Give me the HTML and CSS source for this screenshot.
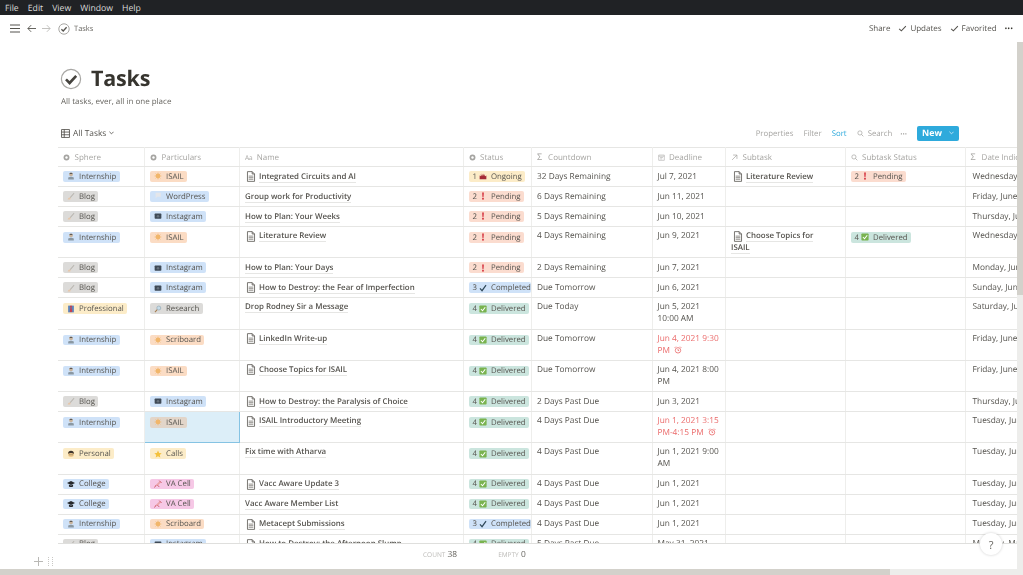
FILE: index.html
```html
<!DOCTYPE html>
<html lang="en">
<head>
<meta charset="utf-8">
<title>Tasks</title>
<link rel="stylesheet" href="styles.css">
</head>
<body>
<svg class="defs" width="0" height="0" aria-hidden="true">
  <symbol id="doc" viewBox="0 0 12 14"><path d="M1.5 .8h6l3 3v9.4h-9z M7.5 .8v3h3" fill="none" stroke="#55534e" stroke-width="1"/><path d="M3 6.5h6M3 8.5h6M3 10.5h6" stroke="#8d8b87" stroke-width="1.2"/></symbol>
  <symbol id="circ" viewBox="0 0 10 10"><circle cx="5" cy="5" r="4.2" fill="#a5a4a1"/><circle cx="5" cy="5" r="1.7" fill="#fff"/></symbol>
  <symbol id="cal" viewBox="0 0 10 10"><path d="M1 1.5h8v7.5h-8zM1 3.2h8M3 5h4M3 7h3" fill="none" stroke="#a5a4a1" stroke-width=".8"/></symbol>
  <symbol id="ne" viewBox="0 0 10 10"><path d="M1.5 8.5L8.5 1.5M3 1.5h5.5V7" fill="none" stroke="#a5a4a1" stroke-width="1"/></symbol>
  <symbol id="mag" viewBox="0 0 10 10"><circle cx="4.2" cy="4.2" r="3" fill="none" stroke="#a5a4a1"/><path d="M6.4 6.4L9 9" stroke="#a5a4a1" stroke-width="1.1"/></symbol>
  <symbol id="tick" viewBox="0 0 12 10"><path d="M1.2 5.4L4.4 8.4 10.8 1.6" fill="none" stroke="#55534e" stroke-width="1.5"/></symbol>
  <symbol id="e-intern" viewBox="0 0 10 10"><circle cx="5" cy="3" r="2.3" fill="#c9b49c"/><path d="M2.7 2.4Q5 -.4 7.3 2.4z" fill="#5d5a55"/><path d="M1.5 9.5V7q3.5-2 7 0v2.5z" fill="#8a98a3"/></symbol>
  <symbol id="e-blog" viewBox="0 0 10 10"><path d="M8.5 1L3.5 6.5 4.5 7.5 9.3 2z" fill="#b9b6b0"/><path d="M.8 9.5Q1.5 6.5 4 7q1 1.5 0 2.5z" fill="#e6c6a8"/></symbol>
  <symbol id="e-isail" viewBox="0 0 10 10"><circle cx="5" cy="5" r="3" fill="#f1b66b"/><path d="M5 .8v1.4M5 7.8v1.4M.8 5h1.4M7.8 5h1.4M2 2l1 1M7 7l1 1M8 2L7 3M3 7L2 8" stroke="#f1b66b" stroke-width=".9"/></symbol>
  <symbol id="e-wp" viewBox="0 0 10 10"><path d="M2 1h6.5v5H4L2 8z" fill="#e4e6ea"/></symbol>
  <symbol id="e-ig" viewBox="0 0 10 10"><rect x=".8" y="2" width="8.4" height="6.4" rx=".8" fill="#3f4a57"/><circle cx="5" cy="5.2" r="1.6" fill="#67727e"/></symbol>
  <symbol id="e-pro" viewBox="0 0 10 10"><rect x="1.4" y=".8" width="7.2" height="8.4" fill="#5e84bb"/><path d="M3.6 1h2.8L5.6 3.4 6.6 8 5 9.2 3.4 8l1-4.6z" fill="#c83e4a"/></symbol>
  <symbol id="e-res" viewBox="0 0 10 10"><circle cx="6" cy="3.8" r="2.5" fill="#c5dbe8" stroke="#8da3b0" stroke-width=".8"/><path d="M4 5.9L1.2 8.8" stroke="#a47c4e" stroke-width="1.3"/></symbol>
  <symbol id="e-per" viewBox="0 0 10 10"><circle cx="5" cy="5" r="3.8" fill="#efc98c"/><path d="M1.2 4.6Q1.6 .8 5 .8t3.8 3.8q-3.8-1.6-7.6 0z" fill="#3c342d"/><path d="M3 6h1.4M5.6 6H7" stroke="#3c342d" stroke-width=".8"/></symbol>
  <symbol id="e-star" viewBox="0 0 10 10"><path d="M5 .6l1.4 3 3.2.4-2.4 2.2.7 3.2L5 7.8 2.1 9.4l.7-3.2L.4 4l3.2-.4z" fill="#f4c13c"/></symbol>
  <symbol id="e-cap" viewBox="0 0 10 10"><path d="M5 1.2L10 3.8 5 6.4 0 3.8z" fill="#26292d"/><path d="M2.4 5.6V8Q5 9.6 7.6 8V5.6L5 7z" fill="#26292d"/></symbol>
  <symbol id="e-syr" viewBox="0 0 10 10"><path d="M7 1.6L2.6 6l1.6 1.6L8.6 3.2z" fill="#e9a3a9"/><path d="M2.8 6.2L.6 9.4M6.6.8l2.8 2.8" stroke="#c5414d" stroke-width="1"/><path d="M4.4 6.4l2.2 2.4" stroke="#c5414d" stroke-width=".9"/></symbol>
  <symbol id="e-ong" viewBox="0 0 10 10"><path d="M.8 9V4.4l1.5 1V2.4l1.3 3V1.6L5 5.4V2l1.4 3.4V2.4l1.3 3 1.5-1V9z" fill="#a52a36"/></symbol>
  <symbol id="e-pend" viewBox="0 0 10 10"><path d="M3.9 .6h2.2L5.6 6.6H4.4z" fill="#d5333f"/><circle cx="5" cy="8.4" r="1.2" fill="#d5333f"/></symbol>
  <symbol id="e-comp" viewBox="0 0 10 10"><path d="M1.2 5.4L3.8 8.4 8.8 1.4" fill="none" stroke="#2f4858" stroke-width="1.5"/></symbol>
  <symbol id="e-del" viewBox="0 0 10 10"><rect x=".5" y=".5" width="9" height="9" rx="1" fill="#79b34f"/><path d="M2.4 5l2 2.2 3.4-4.4" fill="none" stroke="#fff" stroke-width="1.3"/></symbol>
  <symbol id="alarm" viewBox="0 0 10 10"><circle cx="5" cy="5.4" r="3.4" fill="none" stroke="#ea6a6a"/><path d="M5 3.6v2h1.4M.8 2.4L2.4.8M9.2 2.4L7.6.8" fill="none" stroke="#ea6a6a"/></symbol>
</svg>

<nav class="menubar"><span>File</span><span>Edit</span><span>View</span><span>Window</span><span>Help</span></nav>

<header class="topbar">
  <div class="crumbs">
    <svg class="i-burger" viewBox="0 0 10 9"><path d="M0 1h10M0 4.5h10M0 8h10" stroke="#55534e"/></svg>
    <svg class="i-arrow" viewBox="0 0 10 9"><path d="M10 4.5H1M4.6 .8L1 4.5l3.6 3.7" fill="none" stroke="#55534e"/></svg>
    <svg class="i-arrow" viewBox="0 0 10 9"><path d="M0 4.5h9M5.4 .8L9 4.5 5.4 8.2" fill="none" stroke="#bdbcb9"/></svg>
    <svg class="i-check-s" viewBox="0 0 12 12"><circle cx="6" cy="6" r="5.2" fill="#fff" stroke="#a8a7a4"/><path d="M3.4 6.2L5.2 8l3.4-3.8" fill="none" stroke="#55534e" stroke-width="1.3"/></svg>
    <span class="crumb-text">Tasks</span>
  </div>
  <div class="actions">
    <span>Share</span>
    <span class="act"><svg class="i-tick"><use href="#tick"/></svg>Updates</span>
    <span class="act"><svg class="i-tick"><use href="#tick"/></svg>Favorited</span>
    <span class="dots">•••</span>
  </div>
</header>

<div class="body-row">
  <div class="content">
    <main class="main">
      <div class="title-row">
        <svg class="i-check-l" viewBox="0 0 22 22"><circle cx="11" cy="11" r="9.6" fill="#fff" stroke="#a8a7a4" stroke-width="1.2"/><path d="M6 11.4L9.6 15 16.2 7.8" fill="none" stroke="#45433e" stroke-width="2.6"/></svg>
        <h1>Tasks</h1>
      </div>
      <p class="subtitle">All tasks, ever, all in one place</p>
      <div class="toolbar">
        <div class="view">
          <svg class="i-table" viewBox="0 0 10 10"><path d="M.6.6h8.8v8.8H.6zM.6 3.4h8.8M.6 6.4h8.8M3.6 .6v8.8" fill="none" stroke="#4a4843" stroke-width=".9"/></svg>
          <span>All Tasks</span>
          <svg class="i-chev" viewBox="0 0 6 4"><path d="M.5.5L3 3 5.5.5" fill="none" stroke="#55534e"/></svg>
        </div>
        <div class="tools">
          <span>Properties</span><span>Filter</span><span class="sort">Sort</span>
          <span class="search"><svg class="i-mag"><use href="#mag"/></svg>Search</span>
          <span class="more">•••</span>
          <span class="new"><b>New</b><svg class="i-chev-w" viewBox="0 0 6 4"><path d="M.5.5L3 3 5.5.5" fill="none" stroke="#d5ecf8"/></svg></span>
        </div>
      </div>
      <div class="table-wrap">
        <table class="tasks">
          <colgroup>
            <col class="c1"><col class="c2"><col class="c3"><col class="c4"><col class="c5"><col class="c6"><col class="c7"><col class="c8"><col class="c9">
          </colgroup>
          <thead>
            <tr>
              <th><svg class="hi"><use href="#circ"/></svg>Sphere</th>
              <th><svg class="hi"><use href="#circ"/></svg>Particulars</th>
              <th><span class="aa">Aa</span>Name</th>
              <th><svg class="hi"><use href="#circ"/></svg>Status</th>
              <th><span class="sig">Σ</span>Countdown</th>
              <th><svg class="hi"><use href="#cal"/></svg>Deadline</th>
              <th><svg class="hi"><use href="#ne"/></svg>Subtask</th>
              <th><svg class="hi"><use href="#mag"/></svg>Subtask Status</th>
              <th><span class="sig">Σ</span>Date Indicator</th>
            </tr>
          </thead>
          <tbody>
            <tr>
              <td><span class="tag blue"><svg class="em"><use href="#e-intern"/></svg>Internship</span></td>
              <td><span class="tag orange"><svg class="em"><use href="#e-isail"/></svg>ISAIL</span></td>
              <td><svg class="doc"><use href="#doc"/></svg><span class="lnk">Integrated Circuits and AI</span></td>
              <td><span class="tag yellow">1 <svg class="em"><use href="#e-ong"/></svg>Ongoing</span></td>
              <td>32 Days Remaining</td>
              <td>Jul 7, 2021</td>
              <td><svg class="doc"><use href="#doc"/></svg><span class="lnk">Literature Review</span></td>
              <td><span class="tag red">2 <svg class="em"><use href="#e-pend"/></svg>Pending</span></td>
              <td class="dt">Wednesday, July 7, 2021</td>
            </tr>
            <tr>
              <td><span class="tag gray"><svg class="em"><use href="#e-blog"/></svg>Blog</span></td>
              <td><span class="tag blue"><svg class="em"><use href="#e-wp"/></svg>WordPress</span></td>
              <td><span class="lnk">Group work for Productivity</span></td>
              <td><span class="tag red">2 <svg class="em"><use href="#e-pend"/></svg>Pending</span></td>
              <td>6 Days Remaining</td>
              <td>Jun 11, 2021</td>
              <td></td><td></td>
              <td class="dt">Friday, June 11, 2021</td>
            </tr>
            <tr>
              <td><span class="tag gray"><svg class="em"><use href="#e-blog"/></svg>Blog</span></td>
              <td><span class="tag blue"><svg class="em"><use href="#e-ig"/></svg>Instagram</span></td>
              <td><span class="lnk">How to Plan: Your Weeks</span></td>
              <td><span class="tag red">2 <svg class="em"><use href="#e-pend"/></svg>Pending</span></td>
              <td>5 Days Remaining</td>
              <td>Jun 10, 2021</td>
              <td></td><td></td>
              <td class="dt">Thursday, June 10, 2021</td>
            </tr>
            <tr class="tall">
              <td><span class="tag blue"><svg class="em"><use href="#e-intern"/></svg>Internship</span></td>
              <td><span class="tag orange"><svg class="em"><use href="#e-isail"/></svg>ISAIL</span></td>
              <td><svg class="doc"><use href="#doc"/></svg><span class="lnk">Literature Review</span></td>
              <td><span class="tag red">2 <svg class="em"><use href="#e-pend"/></svg>Pending</span></td>
              <td>4 Days Remaining</td>
              <td>Jun 9, 2021</td>
              <td><svg class="doc"><use href="#doc"/></svg><span class="lnk">Choose Topics for<br>ISAIL</span></td>
              <td><span class="tag green">4 <svg class="em"><use href="#e-del"/></svg>Delivered</span></td>
              <td class="dt">Wednesday, June 9, 2021</td>
            </tr>
            <tr>
              <td><span class="tag gray"><svg class="em"><use href="#e-blog"/></svg>Blog</span></td>
              <td><span class="tag blue"><svg class="em"><use href="#e-ig"/></svg>Instagram</span></td>
              <td><span class="lnk">How to Plan: Your Days</span></td>
              <td><span class="tag red">2 <svg class="em"><use href="#e-pend"/></svg>Pending</span></td>
              <td>2 Days Remaining</td>
              <td>Jun 7, 2021</td>
              <td></td><td></td>
              <td class="dt">Monday, June 7, 2021</td>
            </tr>
            <tr>
              <td><span class="tag gray"><svg class="em"><use href="#e-blog"/></svg>Blog</span></td>
              <td><span class="tag blue"><svg class="em"><use href="#e-ig"/></svg>Instagram</span></td>
              <td><svg class="doc"><use href="#doc"/></svg><span class="lnk">How to Destroy: the Fear of Imperfection</span></td>
              <td><span class="tag sky">3 <svg class="em"><use href="#e-comp"/></svg>Completed</span></td>
              <td>Due Tomorrow</td>
              <td>Jun 6, 2021</td>
              <td></td><td></td>
              <td class="dt">Sunday, June 6, 2021</td>
            </tr>
            <tr class="tall">
              <td><span class="tag yellow"><svg class="em"><use href="#e-pro"/></svg>Professional</span></td>
              <td><span class="tag gray"><svg class="em"><use href="#e-res"/></svg>Research</span></td>
              <td><span class="lnk">Drop Rodney Sir a Message</span></td>
              <td><span class="tag green">4 <svg class="em"><use href="#e-del"/></svg>Delivered</span></td>
              <td>Due Today</td>
              <td>Jun 5, 2021<br>10:00 AM</td>
              <td></td><td></td>
              <td class="dt">Saturday, June 5, 2021</td>
            </tr>
            <tr class="tall">
              <td><span class="tag blue"><svg class="em"><use href="#e-intern"/></svg>Internship</span></td>
              <td><span class="tag orange"><svg class="em"><use href="#e-isail"/></svg>Scriboard</span></td>
              <td><svg class="doc"><use href="#doc"/></svg><span class="lnk">LinkedIn Write-up</span></td>
              <td><span class="tag green">4 <svg class="em"><use href="#e-del"/></svg>Delivered</span></td>
              <td>Due Tomorrow</td>
              <td class="late">Jun 4, 2021 9:30<br>PM <svg class="alarm"><use href="#alarm"/></svg></td>
              <td></td><td></td>
              <td class="dt">Friday, June 4, 2021</td>
            </tr>
            <tr class="tall">
              <td><span class="tag blue"><svg class="em"><use href="#e-intern"/></svg>Internship</span></td>
              <td><span class="tag orange"><svg class="em"><use href="#e-isail"/></svg>ISAIL</span></td>
              <td><svg class="doc"><use href="#doc"/></svg><span class="lnk">Choose Topics for ISAIL</span></td>
              <td><span class="tag green">4 <svg class="em"><use href="#e-del"/></svg>Delivered</span></td>
              <td>Due Tomorrow</td>
              <td>Jun 4, 2021 8:00<br>PM</td>
              <td></td><td></td>
              <td class="dt">Friday, June 4, 2021</td>
            </tr>
            <tr>
              <td><span class="tag gray"><svg class="em"><use href="#e-blog"/></svg>Blog</span></td>
              <td><span class="tag blue"><svg class="em"><use href="#e-ig"/></svg>Instagram</span></td>
              <td><svg class="doc"><use href="#doc"/></svg><span class="lnk">How to Destroy: the Paralysis of Choice</span></td>
              <td><span class="tag green">4 <svg class="em"><use href="#e-del"/></svg>Delivered</span></td>
              <td>2 Days Past Due</td>
              <td>Jun 3, 2021</td>
              <td></td><td></td>
              <td class="dt">Thursday, June 3, 2021</td>
            </tr>
            <tr class="tall">
              <td><span class="tag blue"><svg class="em"><use href="#e-intern"/></svg>Internship</span></td>
              <td class="selected"><span class="tag sel"><svg class="em"><use href="#e-isail"/></svg>ISAIL</span></td>
              <td><svg class="doc"><use href="#doc"/></svg><span class="lnk">ISAIL Introductory Meeting</span></td>
              <td><span class="tag green">4 <svg class="em"><use href="#e-del"/></svg>Delivered</span></td>
              <td>4 Days Past Due</td>
              <td class="late">Jun 1, 2021 3:15<br>PM-4:15 PM <svg class="alarm"><use href="#alarm"/></svg></td>
              <td></td><td></td>
              <td class="dt">Tuesday, June 1, 2021</td>
            </tr>
            <tr class="tall">
              <td><span class="tag yellow"><svg class="em"><use href="#e-per"/></svg>Personal</span></td>
              <td><span class="tag yellow"><svg class="em"><use href="#e-star"/></svg>Calls</span></td>
              <td><span class="lnk">Fix time with Atharva</span></td>
              <td><span class="tag green">4 <svg class="em"><use href="#e-del"/></svg>Delivered</span></td>
              <td>4 Days Past Due</td>
              <td>Jun 1, 2021 9:00<br>AM</td>
              <td></td><td></td>
              <td class="dt">Tuesday, June 1, 2021</td>
            </tr>
            <tr>
              <td><span class="tag blue"><svg class="em"><use href="#e-cap"/></svg>College</span></td>
              <td><span class="tag pink"><svg class="em"><use href="#e-syr"/></svg>VA Cell</span></td>
              <td><svg class="doc"><use href="#doc"/></svg><span class="lnk">Vacc Aware Update 3</span></td>
              <td><span class="tag green">4 <svg class="em"><use href="#e-del"/></svg>Delivered</span></td>
              <td>4 Days Past Due</td>
              <td>Jun 1, 2021</td>
              <td></td><td></td>
              <td class="dt">Tuesday, June 1, 2021</td>
            </tr>
            <tr>
              <td><span class="tag blue"><svg class="em"><use href="#e-cap"/></svg>College</span></td>
              <td><span class="tag pink"><svg class="em"><use href="#e-syr"/></svg>VA Cell</span></td>
              <td><span class="lnk">Vacc Aware Member List</span></td>
              <td><span class="tag green">4 <svg class="em"><use href="#e-del"/></svg>Delivered</span></td>
              <td>4 Days Past Due</td>
              <td>Jun 1, 2021</td>
              <td></td><td></td>
              <td class="dt">Tuesday, June 1, 2021</td>
            </tr>
            <tr>
              <td><span class="tag blue"><svg class="em"><use href="#e-intern"/></svg>Internship</span></td>
              <td><span class="tag orange"><svg class="em"><use href="#e-isail"/></svg>Scriboard</span></td>
              <td><svg class="doc"><use href="#doc"/></svg><span class="lnk">Metacept Submissions</span></td>
              <td><span class="tag sky">3 <svg class="em"><use href="#e-comp"/></svg>Completed</span></td>
              <td>4 Days Past Due</td>
              <td>Jun 1, 2021</td>
              <td></td><td></td>
              <td class="dt">Tuesday, June 1, 2021</td>
            </tr>
            <tr>
              <td><span class="tag gray"><svg class="em"><use href="#e-blog"/></svg>Blog</span></td>
              <td><span class="tag blue"><svg class="em"><use href="#e-ig"/></svg>Instagram</span></td>
              <td><svg class="doc"><use href="#doc"/></svg><span class="lnk">How to Destroy: the Afternoon Slump</span></td>
              <td><span class="tag green">4 <svg class="em"><use href="#e-del"/></svg>Delivered</span></td>
              <td>5 Days Past Due</td>
              <td>May 31, 2021</td>
              <td></td><td></td>
              <td class="dt">Monday, May 31, 2021</td>
            </tr>
          </tbody>
        </table>
      </div>
      <div class="summary">
        <div class="add">
          <svg class="i-plus" viewBox="0 0 9 9"><path d="M4.5 0v9M0 4.5h9" stroke="#b9b8b5"/></svg>
          <svg class="i-grip" viewBox="0 0 6 9"><path d="M.5 0v9M4.5 0v9" stroke="#c9c8c5" stroke-dasharray="1 1"/></svg>
        </div>
        <div class="count"><small>COUNT</small> 38</div>
        <div class="count"><small>EMPTY</small> 0</div>
      </div>
    </main>
    <div class="hscroll"><div class="hthumb"></div></div>
  </div>
  <div class="vscroll"><div class="vthumb"></div></div>
</div>
<button class="help">?</button>
</body>
</html>
```

FILE: styles.css
```css
* { box-sizing: border-box; }
html, body { margin: 0; height: 100%; }
body {
  width: 1023px;
  height: 575px;
  overflow: hidden;
  display: flex;
  flex-direction: column;
  position: relative;
  background: #fff;
  color: #55534e;
  font-family: "Open Sans", "Noto Sans", sans-serif;
  font-size: 8.3px;
  text-rendering: geometricPrecision;
  filter: blur(.25px);
}
.defs { position: absolute; }

.menubar {
  flex: none;
  height: 15px;
  background: #202225;
  color: #dcdcdc;
  font-size: 8.7px;
  display: flex;
  align-items: center;
  gap: 9px;
  padding-left: 5px;
}

.topbar {
  flex: none;
  height: 27px;
  display: flex;
  align-items: center;
  justify-content: space-between;
  padding: 0 10px;
}
.crumbs { display: flex; align-items: center; }
.i-burger { width: 10px; height: 9px; margin-right: 7px; }
.i-arrow { width: 9px; height: 9px; margin-right: 6px; }
.i-check-s { width: 12px; height: 12px; margin: 0 4px 0 1px; }
.crumb-text { color: #66645f; font-size: 7.5px; }
.actions { display: flex; align-items: center; gap: 8px; color: #55534e; font-size: 8px; }
.act { display: flex; align-items: center; gap: 3px; }
.i-tick { width: 9px; height: 7px; }
.dots { font-size: 7.5px; color: #37352f; }

.body-row { flex: 1; min-height: 0; display: flex; }
.content { flex: 1; min-width: 0; display: flex; flex-direction: column; }
.vscroll { flex: none; width: 6px; background: #ededeb; }
.vthumb { height: 253px; background: #d3d1cb; }
.hscroll { flex: none; height: 6px; background: #ededeb; }
.hthumb { width: 890px; height: 6px; background: #d3d1cb; }

.main { flex: 1; min-height: 0; padding: 0 0 0 58px; position: relative; }
.title-row { display: flex; align-items: center; height: 24px; margin-top: 25px; margin-left: 2px; }
.i-check-l { width: 22px; height: 22px; }
h1 { margin: 0 0 0 9px; font-size: 21.5px; line-height: 24px; font-weight: 700; color: #37352f; letter-spacing: -.2px; }
.subtitle { margin: 5px 0 0 3px; height: 11px; line-height: 11px; font-size: 8px; color: #66645f; }

.toolbar {
  display: flex;
  justify-content: space-between;
  align-items: center;
  height: 18px;
  margin-top: 17px;
  padding: 0 58px 0 3px;
}
.view { display: flex; align-items: center; gap: 3px; color: #55534e; font-size: 8.4px; }
.i-table { width: 9px; height: 9px; }
.i-chev { width: 5px; height: 4px; }
.tools { display: flex; align-items: center; gap: 10px; color: #a5a4a1; font-size: 7.8px; padding-top: 1px; }
.sort { color: #2eaadc; }
.search { display: flex; align-items: center; gap: 4px; }
.i-mag { width: 7px; height: 7px; }
.more { font-size: 6px; margin-left: -2px; }
.new {
  display: flex;
  align-items: center;
  gap: 7px;
  height: 15px;
  padding: 0 5px;
  margin-top: -1px;
  background: #2eaadc;
  border-radius: 2px;
  color: #fff;
}
.new b { font-size: 8.8px; font-weight: 700; }
.i-chev-w { width: 5px; height: 4px; }

.table-wrap { height: 397px; overflow: hidden; margin-top: 5px; border-bottom: 1px solid #dfdfdd; }
.tasks { table-layout: fixed; border-collapse: collapse; width: 1027px; }
.c1 { width: 86.5px; }
.c2 { width: 95px; }
.c3 { width: 223.5px; }
.c4 { width: 68.5px; }
.c5 { width: 120.5px; }
.c6 { width: 73.5px; }
.c7 { width: 119.5px; }
.c8 { width: 120px; }
.c9 { width: 120px; }
th, td {
  border: 1px solid #eeeeec;
  border-left-color: #f0f0ee;
  border-bottom-color: #e6e6e4;
  vertical-align: top;
  text-align: left;
  white-space: nowrap;
  overflow: hidden;
  font-weight: 400;
}
tr > :first-child { border-left: 0; }
thead th {
  height: 19px;
  padding: 0 5px;
  vertical-align: middle;
  color: #a5a4a1;
  font-size: 8px;
  border-top-color: #e6e6e4;
}
td { height: 20px; padding: 2.5px 5px 0; line-height: 13px; }
.tall td { height: 31.3px; line-height: 12px; padding-top: 3px; }
.tall .tag { margin-top: 2px; }
.tasks .dt { padding-left: 7px; }
.hi { width: 7px; height: 7px; margin-right: 4.5px; vertical-align: -1px; }
.aa { font-size: 6.5px; margin-right: 4px; line-height: 1; }
.sig { font-size: 9px; margin-right: 6px; line-height: 1; }
.doc { width: 10px; height: 11px; margin: -3px 3px -3px 0; vertical-align: -.5px; }
td:nth-child(3) .doc { margin-left: 1px; }
td:nth-child(7) .doc { margin-left: 2px; margin-right: 3px; }
.lnk { border-bottom: 1px solid #e6e6e4; font-weight: 600; font-size: 7.9px; color: #55534e; }
.late { color: #eb6b6b; }
.alarm { width: 8px; height: 8px; margin-left: 2px; vertical-align: -1px; }

.tag {
  display: inline-flex;
  align-items: center;
  height: 10.5px;
  margin-top: 1.5px;
  padding: 1.5px 3.5px 0 4px;
  border-radius: 2px;
  line-height: 9px;
  font-size: 7.8px;
  white-space: pre;
  color: #55534e;
}
.em { width: 8px; height: 8px; flex: none; margin: -1.5px 4px 0 0; }
.blue { background: #cfe2f8; }
.orange { background: #fbdcc4; }
.gray { background: #dcdbd9; }
.yellow { background: #fcecc8; }
.red { background: #fbdccf; }
.green { background: #cbe5de; }
.sky { background: #cfe2f8; padding-right: 0; }
.pink { background: #f6c8e6; }
.sel { background: #e2d5c9; }
.selected { background: #dceef8; border: 1px solid #85c3e3; }

.summary { display: flex; align-items: center; height: 20px; margin-left: -58px; position: relative; }
.add { position: absolute; left: 34px; top: 13px; display: flex; gap: 5px; }
.i-plus { width: 9px; height: 9px; }
.i-grip { width: 6px; height: 9px; }
.count { color: #66645f; font-size: 8.4px; }
.count:nth-child(2) { margin-left: 423px; }
.count:nth-child(3) { margin-left: 41px; }
.count small { font-size: 6.5px; color: #bdbcb9; }

.help {
  position: absolute;
  left: 980px;
  top: 533px;
  width: 22px;
  height: 22px;
  padding: 0;
  border: 0;
  border-radius: 50%;
  background: #fff;
  box-shadow: 0 0 3px rgba(15, 15, 15, .2);
  color: #66645f;
  font-family: "Open Sans", sans-serif;
  font-size: 11px;
}
```
